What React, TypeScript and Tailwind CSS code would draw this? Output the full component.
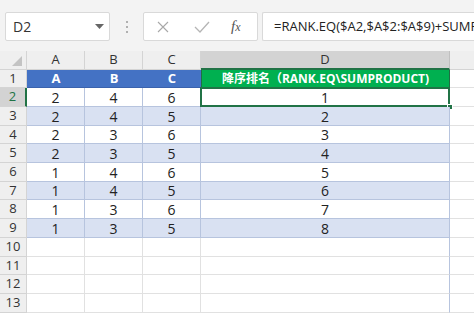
import React from "react";

const heights = [
  "h-[18px]", "h-[19px]", "h-[19px]", "h-[18px]", "h-[19px]", "h-[19px]", "h-[18px]",
  "h-[19px]", "h-[19px]", "h-[19px]", "h-[18px]", "h-[19px]", "h-[19px]",
];

const data: [string, string, string, string][] = [
  ["2", "4", "6", "1"],
  ["2", "4", "5", "2"],
  ["2", "3", "6", "3"],
  ["2", "3", "5", "4"],
  ["1", "4", "6", "5"],
  ["1", "4", "5", "6"],
  ["1", "3", "6", "7"],
  ["1", "3", "5", "8"],
];

export default function App() {
  return (
    <div
      className="w-[474px] h-[315px] overflow-hidden bg-white text-[#222]"
      style={{ fontFamily: "'Open Sans', 'Noto Sans', 'Noto Sans CJK SC', sans-serif" }}
    >
      {/* toolbar */}
      <div className="h-[51px] bg-[#f3f3f3] flex items-start pt-[12px] pl-[5px]">
        <div className="w-[105px] h-[29px] bg-white border border-[#d9d9d9] rounded-[2px] flex items-center justify-between pl-[7px] pr-[5px]">
          <span className="text-[14px] text-[#333]">D2</span>
          <svg width="9" height="6" viewBox="0 0 9 6">
            <path d="M0 0 L9 0 L4.5 5 Z" fill="#666" />
          </svg>
        </div>
        <div className="w-[33px] h-[29px] flex flex-col items-center justify-center gap-[3px]">
          <div className="w-[2px] h-[2px] bg-[#b0b0b0]" />
          <div className="w-[2px] h-[2px] bg-[#b0b0b0]" />
          <div className="w-[2px] h-[2px] bg-[#b0b0b0]" />
        </div>
        <div className="w-[115px] h-[29px] bg-white border border-[#d9d9d9] rounded-[2px] flex items-center pl-[12px]">
          <svg width="14" height="14" viewBox="0 0 14 14">
            <path d="M2 2 L12 12 M12 2 L2 12" stroke="#a8a8a8" strokeWidth="1.1" />
          </svg>
          <svg width="16" height="14" viewBox="0 0 16 14" className="ml-[24px]">
            <path d="M1 7 L6 12 L15 2" stroke="#b5b5b5" strokeWidth="1.3" fill="none" />
          </svg>
          <span
            className="ml-[21px] text-[15px] italic text-[#555]"
            style={{ fontFamily: "'Liberation Serif', 'DejaVu Serif', serif" }}
          >
            f<span className="text-[12px]">x</span>
          </span>
        </div>
        <div className="ml-[4px] flex-1 h-[29px] bg-white border border-[#d9d9d9] border-r-0 rounded-l-[2px] flex items-center pl-[11px] overflow-hidden whitespace-nowrap">
          <span className="text-[13px] text-[#222]">=RANK.EQ($A2,$A$2:$A$9)+SUMPRODUCT(($A$2:$A$9=$A2)*($B$2:$B$9&gt;$B2))</span>
        </div>
      </div>

      {/* column headers */}
      <div className="flex h-[19px]">
        <div className="w-[27px] h-full bg-[#efefef] border-r border-b border-[#d4d4d4] flex items-end justify-end pr-[4px] pb-[3px]">
          <svg width="10" height="10" viewBox="0 0 10 10">
            <path d="M10 0 L10 10 L0 10 Z" fill="#c3c3c3" />
          </svg>
        </div>
        {["A", "B", "C"].map((c) => (
          <div
            key={c}
            className="w-[58px] h-full bg-[#efefef] border-r border-b border-[#d4d4d4] flex items-center justify-center text-[13px] text-[#333]"
          >
            {c}
          </div>
        ))}
        <div className="w-[249px] h-full bg-[#d3d3d3] border-r border-b-2 border-[#c0c0c0] border-b-[#217346] flex items-center justify-center text-[13px] text-[#333]">
          D
        </div>
        <div className="flex-1 h-full bg-[#efefef] border-b border-[#d4d4d4]" />
      </div>

      {/* rows */}
      {heights.map((h, i) => {
        const r = i + 1;
        const isHeader = r === 1;
        const d = r >= 2 && r <= 9 ? data[r - 2] : null;
        const band = r >= 3 && r <= 9 && r % 2 === 1;
        const selected = r === 2;
        const dataBg = band ? "bg-[#d9e1f2]" : "bg-white";
        const lineCls = d ? "border-[#b7c4de]" : "border-[#e1e1e1]";
        return (
          <div key={r} className={`flex ${h}`}>
            <div
              className={`w-[27px] h-full flex items-center justify-center text-[13px] border-b border-[#d4d4d4] ${
                selected
                  ? "bg-[#d3d3d3] border-r-2 border-r-[#217346] text-[#217346]"
                  : "bg-[#efefef] border-r border-r-[#d4d4d4] text-[#333]"
              }`}
            >
              {r}
            </div>
            {isHeader ? (
              <>
                {["A", "B", "C"].map((c) => (
                  <div
                    key={c}
                    className="w-[58px] h-full bg-[#4472c4] border-b border-[#3a62ad] flex items-center justify-center text-[13px] font-bold text-white"
                  >
                    {c}
                  </div>
                ))}
                <div className="w-[249px] h-full bg-[#00b050] border-l border-r border-b border-[#1f6e43] flex items-center justify-center text-[12px] font-bold text-white whitespace-nowrap">
                  降序排名（RANK.EQ\SUMPRODUCT)
                </div>
                <div className="flex-1 h-full border-b border-[#e1e1e1]" />
              </>
            ) : (
              <>
                {[0, 1, 2].map((k) => (
                  <div
                    key={k}
                    className={`w-[58px] h-full ${dataBg} border-r border-b ${lineCls} flex items-center justify-center text-[14px]`}
                  >
                    {d ? d[k] : ""}
                  </div>
                ))}
                <div
                  className={`relative w-[249px] h-full ${dataBg} border-r border-b ${
                    d ? "border-[#b7c4de]" : "border-[#e1e1e1] border-r-[#b7c4de]"
                  } flex items-center justify-center text-[14px]`}
                >
                  {d ? d[3] : ""}
                  {selected && (
                    <>
                      <div className="absolute -left-[1px] -top-[1px] -right-[1px] -bottom-[1px] border-2 border-[#217346]" />
                      <div className="absolute -right-[4px] -bottom-[4px] w-[6px] h-[6px] bg-[#217346] border border-white" />
                    </>
                  )}
                </div>
                <div className="flex-1 h-full border-b border-[#e1e1e1]" />
              </>
            )}
          </div>
        );
      })}
    </div>
  );
}
